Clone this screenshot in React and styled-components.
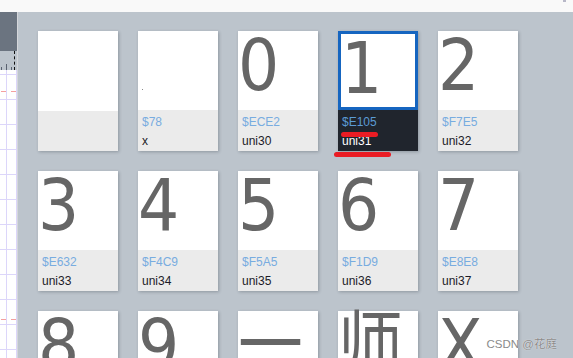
import React from 'react';
import styled, { createGlobalStyle } from 'styled-components';

const GlobalStyle = createGlobalStyle`
  html, body {
    margin: 0;
    padding: 0;
    overflow: hidden;
    background: #bcc4cc;
  }
`;

const glyphs = [
  { glyph: '', hex: '', name: '' },
  { glyph: '', hex: '$78', name: 'x', dot: true },
  { glyph: '0', hex: '$ECE2', name: 'uni30' },
  { glyph: '1', hex: '$E105', name: 'uni31', selected: true },
  { glyph: '2', hex: '$F7E5', name: 'uni32' },
  { glyph: '3', hex: '$E632', name: 'uni33' },
  { glyph: '4', hex: '$F4C9', name: 'uni34' },
  { glyph: '5', hex: '$F5A5', name: 'uni35' },
  { glyph: '6', hex: '$F1D9', name: 'uni36' },
  { glyph: '7', hex: '$E8E8', name: 'uni37' },
  { glyph: '8', hex: '', name: '' },
  { glyph: '9', hex: '', name: '' },
  { glyph: '一', hex: '', name: '' },
  { glyph: '师', hex: '', name: '' },
  { glyph: 'X', hex: '', name: '' },
];

const App = () => {
  return (
    <Page>
      <GlobalStyle />
      <TopBar>
        <Corner />
      </TopBar>
      <Body>
        <SideStrip>
          <DarkBlock />
          <Ruler>
            <Tick $x={1} />
            <Tick $x={6} $tall />
            <Tick $x={11} />
            <DashLine />
          </Ruler>
          <GridPaper>
            <RedDash $top={21} />
            <RedDash $top={249} />
          </GridPaper>
        </SideStrip>
        <Main>
          <CardGrid>
            {glyphs.map((g, i) => (
              <Card key={i} $selected={g.selected}>
                <Preview $selected={g.selected}>
                  {g.dot && <Dot />}
                  <Glyph>{g.glyph}</Glyph>
                </Preview>
                <Info $selected={g.selected}>
                  <Hex $selected={g.selected}>{g.hex}</Hex>
                  <Name $selected={g.selected}>{g.name}</Name>
                </Info>
                {g.selected && (
                  <>
                    <Scribble $left={3} $top={21} $width={37} />
                    <Scribble $left={-4} $top={41} $width={57} />
                  </>
                )}
              </Card>
            ))}
          </CardGrid>
          <Watermark>CSDN @花庭</Watermark>
        </Main>
      </Body>
    </Page>
  );
};

const Page = styled.div`
  width: 573px;
  height: 358px;
  display: flex;
  flex-direction: column;
  overflow: hidden;
  font-family: 'Liberation Sans', Arial, sans-serif;
`;

const TopBar = styled.div`
  height: 12px;
  flex-shrink: 0;
  background: #f9f9f9;
  position: relative;
`;

const Corner = styled.div`
  position: absolute;
  right: 7px;
  top: 0;
  width: 3px;
  height: 2px;
  background: #b8b8c8;
`;

const Body = styled.div`
  flex: 1;
  display: flex;
  min-height: 0;
`;

const SideStrip = styled.div`
  width: 17px;
  flex-shrink: 0;
  display: flex;
  flex-direction: column;
  border-right: 1px solid #d4d6da;
`;

const DarkBlock = styled.div`
  height: 39px;
  background: #6b7480;
`;

const Ruler = styled.div`
  height: 19px;
  background: #bcc4cc;
  position: relative;
`;

const Tick = styled.div`
  position: absolute;
  bottom: 0;
  left: ${p => p.$x}px;
  width: 1px;
  height: ${p => (p.$tall ? 6 : 3)}px;
  background: #5a6270;
`;

const DashLine = styled.div`
  position: absolute;
  left: 14px;
  top: 0;
  bottom: 0;
  border-left: 1px dashed #111;
`;

const GridPaper = styled.div`
  flex: 1;
  position: relative;
  background-color: #fff;
  background-image:
    linear-gradient(#dcd6fa 1px, transparent 1px),
    linear-gradient(90deg, #dcd6fa 1px, transparent 1px);
  background-size: 10px 25px, 10px 25px;
  background-position: 0 4px, 6px 0;
`;

const RedDash = styled.div`
  position: absolute;
  left: 1px;
  right: 0;
  top: ${p => p.$top}px;
  height: 1px;
  background: repeating-linear-gradient(90deg, #f4a0a0 0 5px, transparent 5px 10px);
`;

const Main = styled.div`
  flex: 1;
  position: relative;
  background: #bcc4cc;
  padding: 19px 0 0 20px;
  overflow: hidden;
`;

const CardGrid = styled.div`
  display: grid;
  grid-template-columns: repeat(5, 80px);
  grid-auto-rows: 120px;
  column-gap: 20px;
  row-gap: 20px;
`;

const Card = styled.div`
  position: relative;
  display: flex;
  flex-direction: column;
  box-shadow: 1px 1px 3px rgba(40, 50, 60, 0.3);
  background: ${p => (p.$selected ? '#20252d' : '#ebebeb')};
`;

const Preview = styled.div`
  position: relative;
  box-sizing: border-box;
  height: ${p => (p.$selected ? 79 : 80)}px;
  background: #fff;
  border: ${p => (p.$selected ? '3px solid #1565c0' : 'none')};
`;

const Glyph = styled.div`
  font-family: 'DejaVu Sans', 'Noto Sans CJK SC', sans-serif;
  font-size: 72px;
  line-height: 1;
  margin-top: -2px;
  color: #666;
  white-space: nowrap;
  transform: scaleX(0.9);
  transform-origin: 0 0;
`;

const Dot = styled.div`
  position: absolute;
  left: 4px;
  top: 58px;
  width: 1px;
  height: 1px;
  background: #888;
`;

const Info = styled.div`
  flex: 1;
  display: flex;
  flex-direction: column;
  padding: 3px 0 0 4px;
`;

const Hex = styled.div`
  font-size: 12px;
  line-height: 19px;
  height: 19px;
  color: ${p => (p.$selected ? '#5b9bd5' : '#78ace0')};
`;

const Name = styled.div`
  font-size: 12px;
  line-height: 19px;
  color: ${p => (p.$selected ? '#fff' : '#1c1c28')};
`;

const Scribble = styled.div`
  position: absolute;
  left: ${p => p.$left}px;
  top: ${p => 80 + p.$top}px;
  width: ${p => p.$width}px;
  height: 5px;
  border-radius: 3px;
  background: #ea1c24;
`;

const Watermark = styled.div`
  position: absolute;
  right: 16px;
  bottom: 7px;
  font-family: 'Liberation Sans', 'Noto Sans CJK SC', sans-serif;
  font-size: 11.5px;
  color: #8a8a8a;
  text-shadow: 0 0 1px #fff;
`;

export default App;
